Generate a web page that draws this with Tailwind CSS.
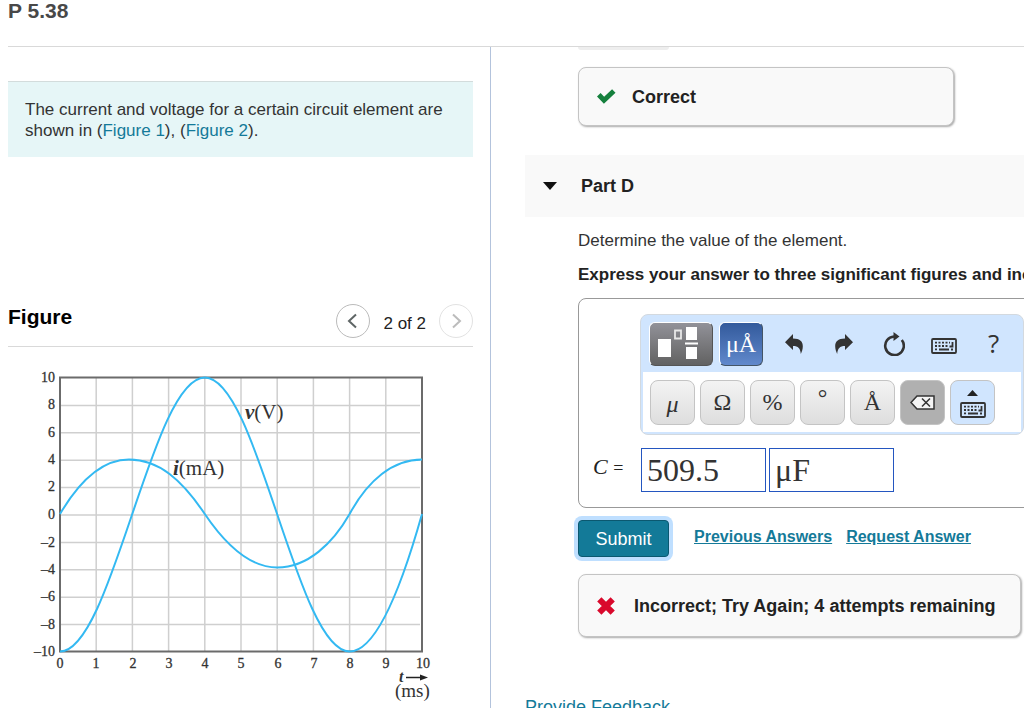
<!DOCTYPE html>
<html lang="en">
<head>
    <title>P 5.38</title>
    <meta charset="utf-8">
    <meta name="viewport" content="width=device-width, initial-scale=1">
    <script src="https://cdn.jsdelivr.net/npm/@tailwindcss/browser@4"></script>
</head>
<body class="flex flex-col h-screen overflow-hidden bg-white font-['Liberation_Sans',Arial,sans-serif] text-[17px] leading-[21px] text-[#222]">

<header class="ml-2 h-[47px] shrink-0 border-b border-[#d9d9d9]">
    <h1 class="text-[21px] leading-[22px] font-bold text-[#484848]">P 5.38</h1>
</header>

<div class="flex flex-1 min-h-0">
    <!-- left: problem and figure -->
    <aside class="w-[491px] shrink-0 overflow-hidden border-r border-[#b3c3dc] pl-2 pr-[17px] pt-[34px]">
        <div class="border-t border-[#d3dcdc] bg-[#e6f6f7] px-[17px] pt-[17px] pb-4 text-[#333]">
            <p>The current and voltage for a certain circuit element are shown in (<a class="text-[#147a99]" href="#figure">Figure 1</a>), (<a class="text-[#147a99]" href="#figure">Figure 2</a>).</p>
        </div>

        <div class="mt-[147px] flex justify-between border-b border-[#d9d9d9] pb-2">
            <h2 class="text-[21px] leading-[26px] font-bold text-black">Figure</h2>
            <div class="flex items-center gap-[13px]">
                <button class="flex size-[34px] items-center justify-center rounded-full border border-[#bbb]" aria-label="Previous figure">
                    <svg class="size-4" viewBox="0 0 16 16" fill="none" stroke="#5f6666" stroke-width="2"><path d="M11 1.500 4 8l7 6.500"/></svg>
                </button>
                <span class="pt-1">2 of 2</span>
                <button class="flex size-[34px] items-center justify-center rounded-full border border-[#e2e2e2]" aria-label="Next figure" disabled>
                    <svg class="size-4" viewBox="0 0 16 16" fill="none" stroke="#bcbcbc" stroke-width="2"><path d="M5 1.500 12 8l-7 6.500"/></svg>
                </button>
            </div>
        </div>

        <svg id="figure" class="mt-3 w-full font-['Liberation_Serif',serif] text-[#333]" viewBox="0 0 465 350" fill="none">
            <!-- grid -->
            <path stroke="#cfcfcf" stroke-width="1.500" d="M88.200 19v273M124.400 19v273M160.600 19v273M196.800 19v273M233 19v273M269.200 19v273M305.400 19v273M341.600 19v273M377.800 19v273M52 46.400h360M52 73.800h360M52 101.200h360M52 128.600h360M52 156h360M52 183.400h360M52 210.800h360M52 238.200h360M52 265.600h360"/>
            <rect x="52" y="18.500" width="362" height="274" stroke="#6b6b6b" stroke-width="2"/>
            <!-- v(V) -->
            <path stroke="#33b9f2" stroke-width="2" d="M52 292.500C104 292.500 144 18.500 196.800 18.500S289 292.500 341.600 292.500C369 292.500 394 226 414 155"/>
            <!-- i(mA) -->
            <path stroke="#33b9f2" stroke-width="2" d="M52 155Q84 100.500 121 100.500C151 100.500 174 121 196.800 155Q233 208.500 269.200 208.500C300 208.500 325 184 341.600 155C360 121 385 100.500 414 100.500"/>
            <g fill="currentColor" stroke="currentColor" stroke-width="0.300" font-size="14" text-anchor="end">
                <text x="47" y="23">10</text>
                <text x="47" y="50">8</text>
                <text x="47" y="78">6</text>
                <text x="47" y="105">4</text>
                <text x="47" y="132">2</text>
                <text x="47" y="160">0</text>
                <text x="47" y="188">–2</text>
                <text x="47" y="215">–4</text>
                <text x="47" y="242">–6</text>
                <text x="47" y="270">–8</text>
                <text x="47" y="297">–10</text>
            </g>
            <g fill="currentColor" stroke="currentColor" stroke-width="0.300" font-size="14" text-anchor="middle">
                <text x="52" y="309">0</text>
                <text x="88" y="309">1</text>
                <text x="125" y="309">2</text>
                <text x="161" y="309">3</text>
                <text x="197" y="309">4</text>
                <text x="233" y="309">5</text>
                <text x="270" y="309">6</text>
                <text x="306" y="309">7</text>
                <text x="342" y="309">8</text>
                <text x="378" y="309">9</text>
                <text x="415" y="309">10</text>
            </g>
            <g fill="currentColor" font-size="21">
                <text x="237" y="60"><tspan font-style="italic" font-weight="bold">v</tspan>(V)</text>
                <text x="165" y="116"><tspan font-style="italic" font-weight="bold">i</tspan>(mA)</text>
                <text x="387" y="338" font-size="19">(ms)</text>
                <text x="391" y="323" font-size="16" font-style="italic" font-weight="bold">t</text>
            </g>
            <path d="M398 318.500h17" stroke="#222" stroke-width="1.500"/>
            <path d="m412 315.500 8 3-8 3z" fill="#222"/>
        </svg>
    </aside>

    <!-- right: parts -->
    <main class="flex-1 min-w-0 overflow-hidden pl-[34px]">
        <div class="ml-[53px] h-[3px] w-[91px] rounded-b-sm bg-[#eee]"></div>

        <div class="ml-[53px] mt-[17px] flex h-[59px] w-[376px] items-center rounded-lg border border-[#c4c4c4] bg-[#f9f9f9] pl-[18px] text-lg font-bold shadow-[1px_1px_2px_#aaa]">
            <svg class="mr-4 h-[15px] w-[19px]" viewBox="0 0 19 15" fill="none" stroke="#15803d" stroke-width="4"><path stroke-width="5" d="m1.800 5.800 5.200 5.400L16.800 2"/></svg>
            Correct
        </div>

        <h2 class="mt-[29px] flex h-[62px] items-center gap-6 bg-[#f9f9f9] pl-[18px] text-lg font-bold">
            <svg class="h-2 w-[14px]" viewBox="0 0 14 8" fill="#111"><path d="M0 0h14L7 8z"/></svg>
            Part D
        </h2>

        <div class="ml-[53px]">
            <p class="mt-[13px] text-[#333]">Determine the value of the element.</p>
            <p class="mt-[13px] font-bold whitespace-nowrap">Express your answer to three significant figures and include the appropriate units.</p>

            <form>
                <div class="mt-[13px] min-w-[480px] rounded-lg border border-[#999] pt-[15px] pb-[15px]">
                    <!-- equation toolbar -->
                    <div class="ml-[61px] w-[384px] overflow-hidden rounded-lg border border-[#d3d9df] bg-[#d0e5fe] font-['Liberation_Serif',serif] text-[#333]">
                        <div class="flex h-[57px] items-center pl-2">
                            <button type="button" class="flex h-11 w-16 items-center justify-center rounded-md border border-t-white border-l-white border-r-[#555] border-b-[#555] bg-linear-to-b from-[#929299] to-[#626262]" aria-label="Templates">
                                <svg class="h-10 w-15" viewBox="0 0 60 40" fill="#fff">
                                    <path d="M7 15h13v18H7zM35 3h11v13H35zM35 23h11v12H35zM34 18.500h13v2H34z"/>
                                    <path d="M24 6.500h6v8h-6z" fill="none" stroke="#e8e8e8" stroke-width="1.800"/>
                                </svg>
                            </button>
                            <button type="button" class="ml-[6px] h-11 w-11 rounded-md border border-t-white border-l-white border-r-[#456] border-b-[#456] bg-linear-to-b from-[#335a9c] to-[#6189cc] text-2xl text-white">μÅ</button>
                            <button type="button" class="ml-[22px]" aria-label="Undo">
                                <svg class="h-5 w-[18px]" viewBox="0 0 18 20" fill="#333"><path d="M8 0v4.500C15 4.500 18 7.500 17.800 12.500c0 3-1 5-2 7.500-.4-5.500-2.500-8-7.800-8V16L0 8.200z"/></svg>
                            </button>
                            <button type="button" class="ml-8" aria-label="Redo">
                                <svg class="h-5 w-[18px]" viewBox="0 0 18 20" fill="#333"><path d="M10 0v4.500C3 4.500 0 7.500.2 12.500c0 3 1 5 2 7.500.4-5.500 2.500-8 7.800-8V16l8-7.800z"/></svg>
                            </button>
                            <button type="button" class="ml-[30px]" aria-label="Reset">
                                <svg class="h-6 w-[22px]" viewBox="0 0 22 24" fill="none" stroke="#333" stroke-width="2.600"><path d="M18.800 8A9.300 9.300 0 1 1 11 4.500"/><path d="M10.500 0l6 4.500-6 4.500z" fill="#333" stroke="none"/></svg>
                            </button>
                            <button type="button" class="ml-[26px] pt-1" aria-label="Keyboard shortcuts">
                                <svg class="h-4 w-[26px]" viewBox="0 0 26 16" fill="none" stroke="#333"><rect x="1" y="1" width="24" height="14" rx="1" stroke-width="1.800"/><path stroke-width="1.800" stroke-dasharray="2 1.500" d="M4 4.700h15M4 8h14M4 11.300h3"/><path stroke-width="1.800" d="M8 11.500h10M20 11.500h2M21.500 4v4.500h-3"/></svg>
                            </button>
                            <button type="button" class="ml-[31px] font-['Open_Sans',sans-serif] text-[26px]" aria-label="Help">?</button>
                        </div>
                        <div class="mx-[2px] mb-[2px] flex h-[60px] items-center gap-[5px] bg-white pl-[7px] text-2xl">
                            <button type="button" class="h-[45px] w-[45px] rounded-lg border border-[#c4c4c4] bg-linear-to-b from-[#f3f3f3] to-[#dedede] pt-1 italic">μ</button>
                            <button type="button" class="h-[45px] w-[45px] rounded-lg border border-[#c4c4c4] bg-linear-to-b from-[#f3f3f3] to-[#dedede]">Ω</button>
                            <button type="button" class="h-[45px] w-[45px] rounded-lg border border-[#c4c4c4] bg-linear-to-b from-[#f3f3f3] to-[#dedede]">%</button>
                            <button type="button" class="h-[45px] w-[45px] rounded-lg border border-[#c4c4c4] bg-linear-to-b from-[#f3f3f3] to-[#dedede] pb-2">°</button>
                            <button type="button" class="h-[45px] w-[45px] rounded-lg border border-[#c4c4c4] bg-linear-to-b from-[#f3f3f3] to-[#dedede]">Å</button>
                            <button type="button" class="flex h-[45px] w-[45px] items-center justify-center rounded-lg border border-[#c4c4c4] bg-[#b0b0b0]" aria-label="Backspace">
                                <svg class="h-[15px] w-[25px]" viewBox="0 0 25 15" fill="none" stroke="#333" stroke-width="1.500"><path fill="#f4f4f4" d="M7 1h17v13H7L1 7.500z"/><path d="m12 3.500 8 8M20 3.500l-8 8"/></svg>
                            </button>
                            <button type="button" class="flex h-[45px] w-[45px] flex-col items-center justify-center gap-[6px] rounded-lg border border-[#c4c4c4] bg-[#d0e5fe] pt-1" aria-label="Show keyboard">
                                <svg class="h-[6px] w-[11px]" viewBox="0 0 11 6" fill="#222"><path d="M5.500 0 11 6H0z"/></svg>
                                <svg class="h-4 w-[26px]" viewBox="0 0 26 16" fill="none" stroke="#333"><rect x="1" y="1" width="24" height="14" rx="1" stroke-width="1.800"/><path stroke-width="1.800" stroke-dasharray="2 1.500" d="M4 4.700h15M4 8h14M4 11.300h3"/><path stroke-width="1.800" d="M8 11.500h10M20 11.500h2M21.500 4v4.500h-3"/></svg>
                            </button>
                        </div>
                    </div>

                    <div class="mt-[13px] flex items-center font-['Liberation_Serif',serif]">
                        <label for="value" class="w-[62px] pb-1 pl-[14px] text-[22px]"><i>C</i> <span class="text-lg">=</span></label>
                        <input id="value" class="h-11 w-[125px] border border-[#2456c0] px-[5px] text-[32px] text-[#333]" type="text" value="509.5">
                        <input class="ml-[3px] h-11 w-[125px] border border-[#2456c0] px-[5px] text-[32px] text-[#333]" type="text" value="μF" aria-label="Units">
                    </div>
                </div>

                <div class="mt-3 flex items-center">
                    <button type="submit" class="h-[37px] w-[91px] rounded-sm border border-[#0b5870] bg-[#137a98] text-lg text-white ring-4 ring-[#bfdfff]">Submit</button>
                    <a class="ml-[25px] pb-1 text-base font-bold text-[#147a99] underline" href="#">Previous Answers</a>
                    <a class="ml-[14px] pb-1 text-base font-bold text-[#147a99] underline" href="#">Request Answer</a>
                </div>
            </form>

            <div class="mt-[17px] flex h-[63px] w-[443px] items-center rounded-lg border border-[#c4c4c4] bg-[#f9f9f9] pl-[18px] text-lg font-bold whitespace-nowrap shadow-[1px_1px_2px_#aaa]">
                <svg class="mr-[19px] size-[18px] shrink-0" viewBox="0 0 18 18" stroke="#d9092c" stroke-width="6"><path d="m2.300 2.300 13.400 13.400M15.700 2.300 2.300 15.700"/></svg>
                Incorrect; Try Again; 4 attempts remaining
            </div>
        </div>

        <a class="mt-[56px] inline-block text-lg text-[#147a99]" href="#">Provide Feedback</a>
    </main>
</div>

</body>
</html>
